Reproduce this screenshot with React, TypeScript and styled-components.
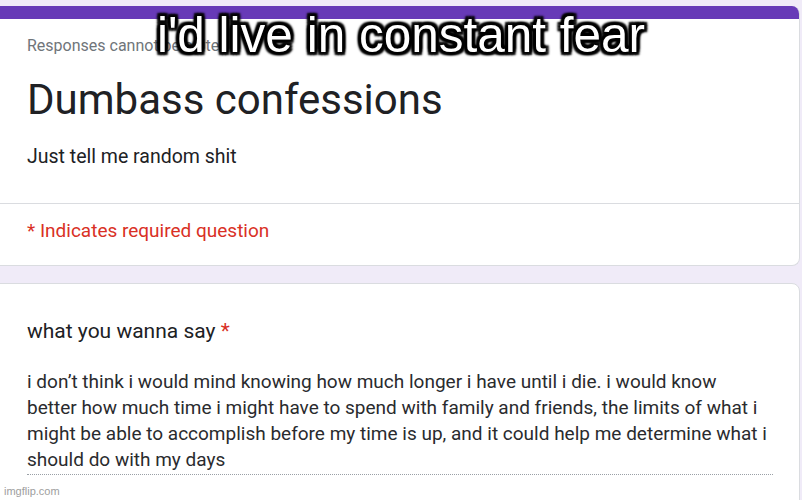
import React from "react";
import styled, { createGlobalStyle } from "styled-components";

const Global = createGlobalStyle`
  html, body { margin: 0; padding: 0; }
  body {
    width: 802px;
    height: 500px;
    overflow: hidden;
    background: #f0ebf8;
    font-family: Roboto, "Liberation Sans", Arial, sans-serif;
  }
`;

const Page = styled.div`
  position: relative;
  width: 802px;
  height: 500px;
  overflow: hidden;
  padding-top: 6px;
  box-sizing: border-box;
`;

const Stack = styled.div`
  display: flex;
  flex-direction: column;
  gap: 17px;
  margin-left: -12px;
  width: 812px;
`;

const Card = styled.div<{ $top?: boolean }>`
  background: #fff;
  border: 1px solid #dadce0;
  border-radius: 8px;
  overflow: hidden;
  display: flex;
  flex-direction: column;
  ${(p) => (p.$top ? "border-top: none;" : "")}
`;

const AccentBar = styled.div`
  height: 13px;
  background: #673ab7;
`;

const Section = styled.div<{ $pt: number; $pb: number }>`
  padding: ${(p) => p.$pt}px 24px ${(p) => p.$pb}px 38px;
  display: flex;
  flex-direction: column;
`;

const Divider = styled.div`
  height: 1px;
  background: #dadce0;
`;

const Note = styled.div`
  font-size: 16px;
  color: #70757a;
  line-height: 20px;
`;

const Title = styled.h1`
  margin: 20px 0 0;
  font-size: 42px;
  font-weight: 400;
  line-height: 48px;
  color: #202124;
`;

const Description = styled.div`
  margin-top: 20px;
  font-size: 19.5px;
  line-height: 26px;
  color: #202124;
`;

const Required = styled.div`
  font-size: 19px;
  line-height: 26px;
  color: #d93025;
`;

const Question = styled.div`
  font-size: 21px;
  line-height: 28px;
  color: #202124;
`;

const Star = styled.span`
  color: #d93025;
`;

const Answer = styled.div`
  margin-top: 24px;
  font-size: 19px;
  line-height: 26px;
  color: #2a2b2e;
  width: 746px;
  padding-bottom: 1px;
  border-bottom: 1px dotted #9aa0a6;
`;

const AnswerLine = styled.span`
  display: block;
  white-space: nowrap;
`;

const Watermark = styled.div`
  position: absolute;
  left: 4px;
  bottom: 3px;
  font-family: "Liberation Sans", Arial, sans-serif;
  font-size: 11px;
  color: #9e9e9e;
`;

const Caption = styled.div`
  position: absolute;
  left: 0;
  right: 0;
  top: 7px;
  text-align: center;
  font-family: "Liberation Sans", Arial, sans-serif;
  font-size: 49.5px;
  line-height: 56px;
  color: #fff;
  text-shadow:
    3px 3px 2px #000, -3px -3px 2px #000, 3px -3px 2px #000, -3px 3px 2px #000,
    0 3px 2px #000, 0 -3px 2px #000, 3px 0 2px #000, -3px 0 2px #000,
    0 0 5px #000;
`;

const answer = [
  "i don’t think i would mind knowing how much longer i have until i die. i would know",
  "better how much time i might have to spend with family and friends, the limits of what i",
  "might be able to accomplish before my time is up, and it could help me determine what i",
  "should do with my days",
];

export default function App() {
  return (
    <Page>
      <Global />
      <Stack>
        <Card $top>
          <AccentBar />
          <Section $pt={17} $pb={33}>
            <Note>Responses cannot be edited</Note>
            <Title>Dumbass confessions</Title>
            <Description>Just tell me random shit</Description>
          </Section>
          <Divider />
          <Section $pt={14} $pb={21}>
            <Required>* Indicates required question</Required>
          </Section>
        </Card>
        <Card>
          <Section $pt={33} $pb={40}>
            <Question>
              what you wanna say <Star>*</Star>
            </Question>
            <Answer>
              {answer.map((line) => (
                <AnswerLine key={line}>{line}</AnswerLine>
              ))}
            </Answer>
          </Section>
        </Card>
      </Stack>
      <Caption>i'd live in constant fear</Caption>
      <Watermark>imgflip.com</Watermark>
    </Page>
  );
}
